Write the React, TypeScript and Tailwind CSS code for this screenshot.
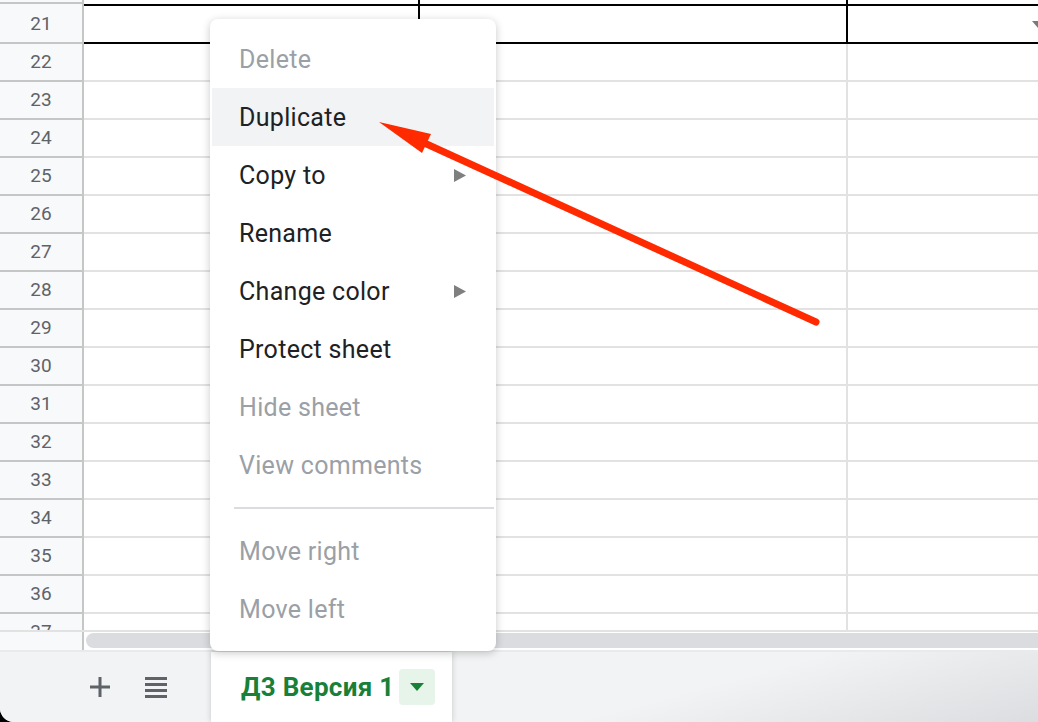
import React from "react";

const rows = Array.from({ length: 16 }, (_, i) => 22 + i);

function Tri() {
  return (
    <svg width="12" height="13" viewBox="0 0 12 13">
      <polygon points="0,0 12,6.5 0,13" fill="#7f7f7f" />
    </svg>
  );
}

type Item = { label: string; enabled: boolean; sub?: boolean; active?: boolean };

const top: Item[] = [
  { label: "Delete", enabled: false },
  { label: "Duplicate", enabled: true, active: true },
  { label: "Copy to", enabled: true, sub: true },
  { label: "Rename", enabled: true },
  { label: "Change color", enabled: true, sub: true },
  { label: "Protect sheet", enabled: true },
  { label: "Hide sheet", enabled: false },
  { label: "View comments", enabled: false },
];
const bottom: Item[] = [
  { label: "Move right", enabled: false },
  { label: "Move left", enabled: false },
];

function MenuItem({ it }: { it: Item }) {
  return (
    <div
      className={
        "mx-[2px] h-[58px] flex items-center justify-between pl-[27px] pr-[28px] " +
        (it.active ? "bg-[#f1f3f4] " : "") +
        (it.enabled ? "text-[#202124]" : "text-[#9aa0a6]")
      }
    >
      <span className="pt-[2px]">{it.label}</span>
      {it.sub && <Tri />}
    </div>
  );
}

export default function App() {
  return (
    <div
      className="relative w-[1038px] h-[722px] bg-black overflow-hidden"
      style={{ fontFamily: "Roboto, 'Noto Sans', sans-serif" }}
    >
      <div className="flex flex-col w-full h-full bg-white rounded-bl-[14px] overflow-hidden">
        {/* grid */}
        <div className="h-[630px] overflow-hidden flex flex-col">
          {/* row 20 fragment */}
          <div className="flex h-[4px] shrink-0">
            <div className="w-[84px] bg-[#f8f9fa] border-r-2 border-b-2 border-[#c4c7c5]" />
            <div className="w-[336px] border-r-2 border-black" />
            <div className="w-[428px] border-r-2 border-black" />
            <div className="flex-1" />
          </div>
          {/* row 21 */}
          <div className="flex h-[40px] shrink-0">
            <div className="w-[84px] bg-[#f8f9fa] border-r-2 border-b-2 border-[#c4c7c5] flex items-center justify-center text-[19px] text-[#5f6368] pt-[2px]">
              21
            </div>
            <div className="w-[336px] border-y-2 border-r-2 border-black" />
            <div className="w-[428px] border-y-2 border-r-2 border-black" />
            <div className="flex-1 border-y-2 border-black relative">
              <svg className="absolute right-[-6px] top-[15px]" width="12" height="7" viewBox="0 0 12 7">
                <polygon points="0,0 12,0 6,7" fill="#7a7a7a" />
              </svg>
            </div>
          </div>
          {rows.map((r) => (
            <div key={r} className="flex h-[38px] shrink-0">
              <div className="w-[84px] bg-[#f8f9fa] border-r-2 border-b-2 border-[#c4c7c5] flex items-center justify-center text-[19px] text-[#5f6368]">
                {r}
              </div>
              <div className="w-[336px] border-b-2 border-r-2 border-[#e2e2e2]" />
              <div className="w-[428px] border-b-2 border-r-2 border-[#e2e2e2]" />
              <div className="flex-1 border-b-2 border-[#e2e2e2]" />
            </div>
          ))}
        </div>
        {/* scrollbar row */}
        <div className="flex h-[22px] shrink-0 border-t-2 border-[#e2e2e2] border-b-2 border-b-[#e8eaed]">
          <div className="w-[84px] bg-[#f8f9fa] border-r-2 border-[#c4c7c5]" />
          <div className="flex-1 bg-white pl-[2px] pt-[1px]">
            <div className="h-[15px] bg-[#dadce0] rounded-l-full" />
          </div>
        </div>
        {/* bottom bar */}
        <div className="flex flex-1 bg-[#f1f3f4]">
          <div className="w-[211px] flex items-center">
            <svg className="ml-[89px]" width="22" height="22" viewBox="0 0 22 22">
              <rect x="9.5" y="1" width="3" height="20" fill="#5f6368" />
              <rect x="1" y="9.5" width="20" height="3" fill="#5f6368" />
            </svg>
            <svg className="ml-[33px]" width="24" height="22" viewBox="0 0 24 22">
              <rect x="1" y="1" width="22" height="3" fill="#5f6368" />
              <rect x="1" y="7" width="22" height="3" fill="#5f6368" />
              <rect x="1" y="13" width="22" height="3" fill="#5f6368" />
              <rect x="1" y="19" width="22" height="3" fill="#5f6368" />
            </svg>
          </div>
          <div className="w-[241px] bg-white flex items-center pl-[30px] shadow-[0_0_6px_rgba(0,0,0,0.18)] z-10">
            <span className="text-[26px] font-bold text-[#188038] tracking-[0.3px]">Д3 Версия 1</span>
            <div className="ml-[4px] w-[36px] h-[36px] rounded-[4px] bg-[#e6f4ea] flex items-center justify-center">
              <svg width="14" height="8" viewBox="0 0 14 8">
                <polygon points="0,0 14,0 7,8" fill="#188038" />
              </svg>
            </div>
          </div>
          <div className="flex-1 bg-[linear-gradient(165deg,#f1f3f4_45%,#dcdde0_100%)]" />
        </div>
      </div>

      {/* context menu */}
      <div className="absolute left-[210px] top-[19px] w-[286px] h-[632px] bg-white rounded-[8px] shadow-[0_2px_8px_rgba(0,0,0,0.22)] pt-[11px] text-[25px] tracking-[0.3px] z-20">
        {top.map((it) => (
          <MenuItem key={it.label} it={it} />
        ))}
        <div className="h-[28px] flex items-center pl-[24px] pr-[2px]">
          <div className="h-[2px] w-full bg-[#dadce0]" />
        </div>
        {bottom.map((it) => (
          <MenuItem key={it.label} it={it} />
        ))}
      </div>

      {/* annotation arrow */}
      <svg className="absolute left-0 top-0 pointer-events-none z-30" width="1038" height="722" viewBox="0 0 1038 722">
        <line x1="816" y1="322" x2="420" y2="141" stroke="#ff2a00" strokeWidth="7" strokeLinecap="round" />
        <polygon points="379,122 431,134 422,153" fill="#ff2a00" />
      </svg>
    </div>
  );
}
